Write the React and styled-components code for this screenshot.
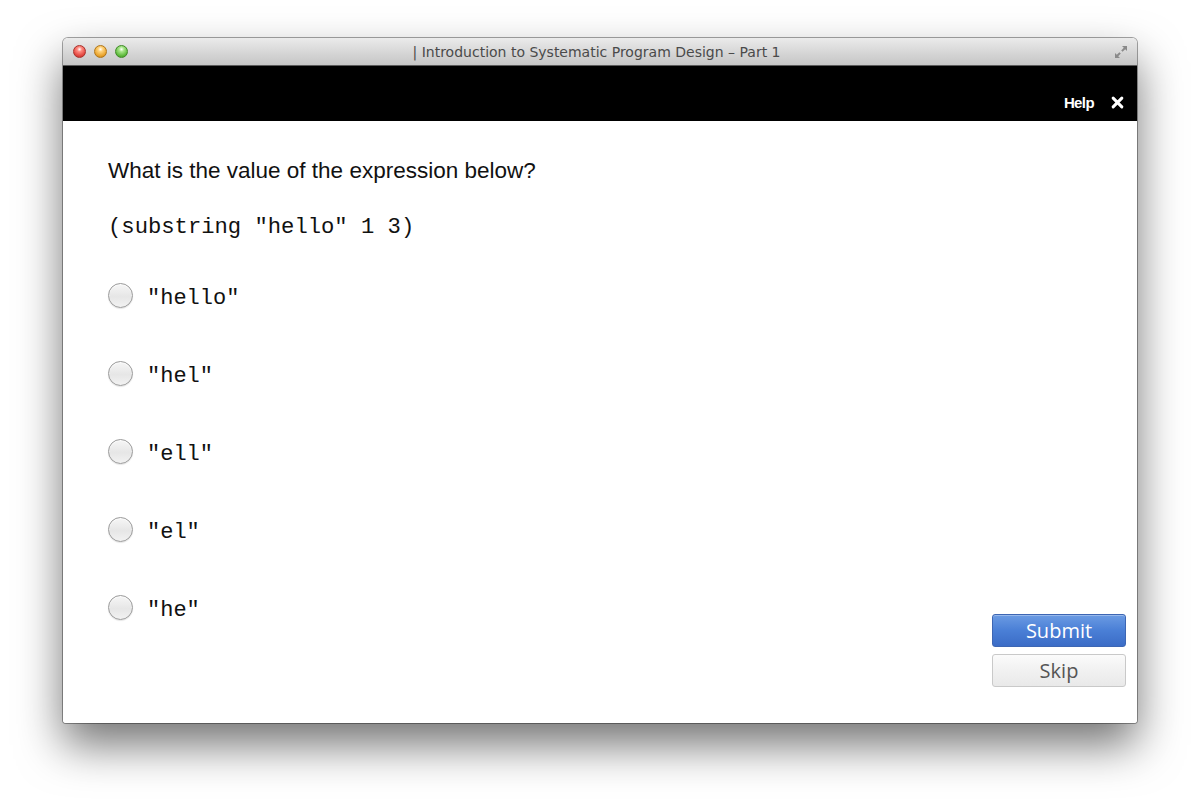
import React, { useState } from "react";
import styled, { createGlobalStyle } from "styled-components";

const GlobalStyle = createGlobalStyle`
  html, body {
    margin: 0;
    padding: 0;
    background: #ffffff;
  }
  body {
    font-family: "Liberation Sans", Arial, sans-serif;
  }
`;

const Page = styled.div`
  width: 1200px;
  height: 811px;
  padding: 38px 63px 0;
  box-sizing: border-box;
  overflow: hidden;
`;

const Window = styled.div`
  width: 1074px;
  height: 685px;
  display: flex;
  flex-direction: column;
  border-radius: 5px 5px 3px 3px;
  overflow: hidden;
  box-shadow: 0 0 0 1px rgba(0, 0, 0, 0.35), 0 22px 45px rgba(0, 0, 0, 0.55);
`;

const TitleBar = styled.div`
  height: 28px;
  flex-shrink: 0;
  display: flex;
  align-items: center;
  background: linear-gradient(#ebebeb, #d4d4d4 60%, #c6c6c6);
  border-bottom: 1px solid #5a5a5a;
  box-sizing: border-box;
`;

const Lights = styled.div`
  display: flex;
  gap: 8px;
  padding-left: 10px;
`;

const Light = styled.span`
  width: 13px;
  height: 13px;
  border-radius: 50%;
  box-sizing: border-box;
  border: 1px solid ${(p) => p.$edge};
  background: radial-gradient(circle at 50% 30%, #ffffff 0, ${(p) => p.$hi} 25%, ${(p) => p.$color} 70%, ${(p) => p.$edge} 100%);
`;

const Title = styled.div`
  flex: 1;
  text-align: center;
  font-family: "DejaVu Sans", "Liberation Sans", sans-serif;
  font-size: 14px;
  color: #4a4a4a;
  margin-left: -48px;
`;

const Resize = styled.div`
  width: 16px;
  height: 16px;
  margin-right: 8px;
  display: flex;
`;

const TopBar = styled.div`
  height: 55px;
  flex-shrink: 0;
  background: #000000;
  display: flex;
  align-items: flex-end;
  justify-content: flex-end;
  padding: 0 13px 10px 0;
  box-sizing: border-box;
  gap: 17px;
`;

const HelpLink = styled.span`
  color: #ffffff;
  font-family: "Liberation Sans", Arial, sans-serif;
  font-weight: bold;
  font-size: 15px;
  letter-spacing: -0.6px;
  line-height: 16px;
`;

const CloseIcon = styled.svg`
  width: 13px;
  height: 13px;
  margin-bottom: 2px;
`;

const Content = styled.div`
  flex: 1;
  background: #ffffff;
  display: flex;
  justify-content: space-between;
  padding: 37px 11px 36px 45px;
`;

const Question = styled.div`
  display: flex;
  flex-direction: column;
`;

const Prompt = styled.div`
  font-family: "Liberation Sans", Arial, sans-serif;
  font-size: 22.5px;
  color: #111111;
  line-height: 26px;
`;

const Code = styled.div`
  font-family: "Liberation Mono", "Courier New", monospace;
  font-size: 22.2px;
  color: #111111;
  line-height: 26px;
  margin-top: 31px;
`;

const Options = styled.div`
  display: flex;
  flex-direction: column;
  gap: 53px;
  margin-top: 42px;
`;

const Option = styled.label`
  display: flex;
  align-items: center;
  gap: 14px;
  height: 25px;
  cursor: pointer;
`;

const Radio = styled.span`
  width: 25px;
  height: 25px;
  border-radius: 50%;
  box-sizing: border-box;
  border: 1px solid #9a9a9a;
  background: linear-gradient(#f6f6f6, #e6e6e6 55%, #f2f2f2);
  box-shadow: inset 0 1px 1px rgba(255, 255, 255, 0.9), 0 1px 1px rgba(0, 0, 0, 0.1);
  display: flex;
  align-items: center;
  justify-content: center;
`;

const Dot = styled.span`
  width: 10px;
  height: 10px;
  border-radius: 50%;
  background: #333333;
`;

const OptionText = styled.span`
  font-family: "Liberation Mono", "Courier New", monospace;
  font-size: 22px;
  color: #111111;
  margin-top: 6px;
`;

const Actions = styled.div`
  display: flex;
  flex-direction: column;
  align-self: flex-end;
  gap: 7px;
`;

const Button = styled.button`
  width: 134px;
  height: 33px;
  border-radius: 3px;
  font-family: "Open Sans", "DejaVu Sans", sans-serif;
  font-size: 20px;
  line-height: 1;
  padding: 0;
  cursor: pointer;
  border: 1px solid ${(p) => (p.$primary ? "#3d66b3" : "#c9c9c9")};
  color: ${(p) => (p.$primary ? "#ffffff" : "#555555")};
  background: ${(p) =>
    p.$primary
      ? "linear-gradient(#6b9be3, #4a7fd6 50%, #3b6cc6)"
      : "linear-gradient(#fbfbfb, #f1f1f1 50%, #e9e9e9)"};
  box-shadow: ${(p) => (p.$primary ? "inset 0 1px 0 rgba(255,255,255,0.3)" : "none")};
`;

const choices = ['"hello"', '"hel"', '"ell"', '"el"', '"he"'];

export default function App() {
  const [selected, setSelected] = useState(null);

  return (
    <Page>
      <GlobalStyle />
      <Window>
        <TitleBar>
          <Lights>
            <Light $color="#e0443e" $hi="#ff8a80" $edge="#a8322c" />
            <Light $color="#e8a12a" $hi="#ffd27a" $edge="#b07618" />
            <Light $color="#5bb83a" $hi="#a8e68a" $edge="#3f8a27" />
          </Lights>
          <Title>| Introduction to Systematic Program Design – Part 1</Title>
          <Resize>
            <svg viewBox="0 0 16 16" width="16" height="16">
              <path d="M9 2h5v5l-1.8-1.8-2.6 2.6-1.4-1.4 2.6-2.6z" fill="#8a8a8a" />
              <path d="M7 14H2V9l1.8 1.8 2.6-2.6 1.4 1.4-2.6 2.6z" fill="#8a8a8a" />
            </svg>
          </Resize>
        </TitleBar>
        <TopBar>
          <HelpLink>Help</HelpLink>
          <CloseIcon viewBox="0 0 12 12">
            <path d="M2 2l8 8M10 2l-8 8" stroke="#ffffff" strokeWidth="2.8" strokeLinecap="round" />
          </CloseIcon>
        </TopBar>
        <Content>
          <Question>
            <Prompt>What is the value of the expression below?</Prompt>
            <Code>(substring "hello" 1 3)</Code>
            <Options>
              {choices.map((choice, index) => (
                <Option key={choice} onClick={() => setSelected(index)}>
                  <Radio>{selected === index && <Dot />}</Radio>
                  <OptionText>{choice}</OptionText>
                </Option>
              ))}
            </Options>
          </Question>
          <Actions>
            <Button $primary>Submit</Button>
            <Button>Skip</Button>
          </Actions>
        </Content>
      </Window>
    </Page>
  );
}
